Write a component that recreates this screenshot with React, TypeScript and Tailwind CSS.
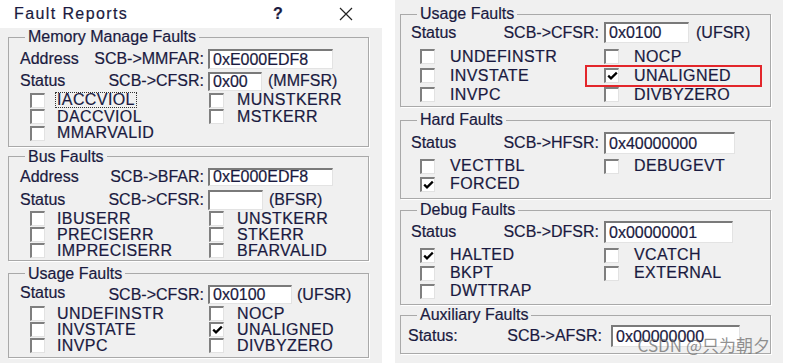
import React from "react";

function Check({ checked }: { checked?: boolean }) {
  return (
    <span className="flex h-[15px] w-[15px] shrink-0 items-center justify-center border-t-2 border-l-2 border-r border-b border-t-[#7f7f7f] border-l-[#7f7f7f] border-r-[#e2e2e2] border-b-[#e2e2e2] bg-white">
      {checked && (
        <svg width="11" height="10" viewBox="0 0 11 10">
          <path d="M1.2 4.6 L4 7.4 L9.8 1.6" fill="none" stroke="#000" strokeWidth="2.2" />
        </svg>
      )}
    </span>
  );
}

function Item({
  label,
  checked,
  gap,
  focus,
}: {
  label: string;
  checked?: boolean;
  gap: string;
  focus?: boolean;
}) {
  return (
    <div className={`flex items-center ${gap}`}>
      <Check checked={checked} />
      {focus ? (
        <span className="-ml-[2px] border border-dotted border-[#333] px-[1px] leading-[14px] tracking-[0.4px]">{label}</span>
      ) : (
        <span className="tracking-[0.4px]">{label}</span>
      )}
    </div>
  );
}

function Input({ value, cls }: { value: string; cls: string }) {
  return (
    <div
      className={`flex items-center border-t-2 border-l-2 border-r border-b border-t-[#7a7a7a] border-l-[#7a7a7a] border-r-[#e3e3e3] border-b-[#e3e3e3] bg-white pl-[3px] ${cls}`}
    >
      {value}
    </div>
  );
}

function Group({
  title,
  className,
  children,
}: {
  title: string;
  className: string;
  children: React.ReactNode;
}) {
  return (
    <fieldset className={`border border-[#a9a9a9] shadow-[1px_1px_0_#ffffff] ${className}`}>
      <legend className="ml-[16px] px-[3px] leading-[16px]">{title}</legend>
      {children}
    </fieldset>
  );
}

export default function App() {
  return (
    <div className="flex h-[363px] w-[786px] overflow-hidden bg-white font-['Liberation_Sans',Arial,sans-serif] text-[16px] text-[#1a1a40] [-webkit-text-stroke:0.2px_#1a1a40]">
      {/* Left panel */}
      <div className="flex w-[382px] flex-col">
        <div className="flex h-[28px] shrink-0 items-center bg-white">
          <span className="ml-[14px] w-[259px] text-[16px] tracking-[1.4px]">Fault Reports</span>
          <span className="text-[16px] font-bold">?</span>
          <svg className="ml-[56px]" width="14" height="14" viewBox="0 0 14 14">
            <path d="M1 1 L13 13 M13 1 L1 13" stroke="#222" strokeWidth="1.2" fill="none" />
          </svg>
        </div>
        <div className="flex flex-1 flex-col bg-[#f0f0f0] pl-[8px]">
          {/* Memory Manage Faults */}
          <Group title="Memory Manage Faults" className="mt-[1px] w-[361px] pb-[4px]">
            <div className="mt-[4px] flex h-[20px] items-center pl-[11px]">
              <span className="w-[70px]">Address</span>
              <span className="w-[114px] text-right">SCB-&gt;MMFAR:</span>
              <Input value="0xE000EDF8" cls="ml-[4px] h-[20px] w-[125px]" />
            </div>
            <div className="mt-[2px] flex h-[20px] items-center pl-[11px]">
              <span className="w-[70px]">Status</span>
              <span className="w-[114px] text-right">SCB-&gt;CFSR:</span>
              <Input value="0x00" cls="ml-[4px] h-[19px] w-[54px]" />
              <span className="ml-[6px]">(MMFSR)</span>
            </div>
            <div className="mt-[1px] grid auto-rows-[16.5px] grid-cols-[179px_1fr] pl-[21px]">
              <Item label="IACCVIOL" gap="gap-[12px]" focus />
              <Item label="MUNSTKERR" gap="gap-[13px]" />
              <Item label="DACCVIOL" gap="gap-[12px]" />
              <Item label="MSTKERR" gap="gap-[13px]" />
              <Item label="MMARVALID" gap="gap-[12px]" />
            </div>
          </Group>

          {/* Bus Faults */}
          <Group title="Bus Faults" className="mt-[2px] w-[361px] pb-[1px]">
            <div className="mt-[3px] flex h-[18px] items-center pl-[11px]">
              <span className="w-[70px]">Address</span>
              <span className="w-[114px] text-right">SCB-&gt;BFAR:</span>
              <Input value="0xE000EDF8" cls="ml-[4px] h-[18px] w-[125px]" />
            </div>
            <div className="mt-[4px] flex h-[20px] items-center pl-[11px]">
              <span className="w-[70px]">Status</span>
              <span className="w-[114px] text-right">SCB-&gt;CFSR:</span>
              <Input value="" cls="ml-[4px] h-[20px] w-[55px]" />
              <span className="ml-[6px]">(BFSR)</span>
            </div>
            <div className="mt-[1px] grid auto-rows-[16px] grid-cols-[179px_1fr] pl-[21px]">
              <Item label="IBUSERR" gap="gap-[12px]" />
              <Item label="UNSTKERR" gap="gap-[13px]" />
              <Item label="PRECISERR" gap="gap-[12px]" />
              <Item label="STKERR" gap="gap-[13px]" />
              <Item label="IMPRECISERR" gap="gap-[12px]" />
              <Item label="BFARVALID" gap="gap-[13px]" />
            </div>
          </Group>

          {/* Usage Faults */}
          <Group title="Usage Faults" className="mt-[5px] w-[361px] pb-[3px]">
            <div className="mt-[3px] flex h-[20px] items-center pl-[11px]">
              <span className="w-[70px] self-start leading-[16px]">Status</span>
              <span className="w-[114px] text-right">SCB-&gt;CFSR:</span>
              <Input value="0x0100" cls="ml-[4px] h-[19px] w-[84px]" />
              <span className="ml-[5px]">(UFSR)</span>
            </div>
            <div className="mt-[1px] grid auto-rows-[16px] grid-cols-[179px_1fr] pl-[21px]">
              <Item label="UNDEFINSTR" gap="gap-[12px]" />
              <Item label="NOCP" gap="gap-[13px]" />
              <Item label="INVSTATE" gap="gap-[12px]" />
              <Item label="UNALIGNED" gap="gap-[13px]" checked />
              <Item label="INVPC" gap="gap-[12px]" />
              <Item label="DIVBYZERO" gap="gap-[13px]" />
            </div>
          </Group>
        </div>
      </div>

      {/* Right panel */}
      <div className="relative ml-[13px] flex w-[388px] flex-col bg-[#f0f0f0] pl-[5px] pt-[6px]">
        {/* Usage Faults */}
        <Group title="Usage Faults" className="w-[371px] pb-[2px]">
          <div className="flex h-[21px] items-center pl-[10px]">
            <span className="w-[86px]">Status</span>
            <span className="w-[102px] text-right">SCB-&gt;CFSR:</span>
            <Input value="0x0100" cls="ml-[5px] h-[21px] w-[85px]" />
            <span className="ml-[7px]">(UFSR)</span>
          </div>
          <div className="mt-[4px] grid auto-rows-[19px] grid-cols-[184px_1fr] pl-[19px]">
            <Item label="UNDEFINSTR" gap="gap-[15px]" />
            <Item label="NOCP" gap="gap-[15px]" />
            <Item label="INVSTATE" gap="gap-[15px]" />
            <Item label="UNALIGNED" gap="gap-[15px]" checked />
            <Item label="INVPC" gap="gap-[15px]" />
            <Item label="DIVBYZERO" gap="gap-[15px]" />
          </div>
        </Group>

        {/* Hard Faults */}
        <Group title="Hard Faults" className="mt-[5px] w-[371px] pb-[5px]">
          <div className="mt-[4px] flex h-[22px] items-center pl-[10px]">
            <span className="w-[86px]">Status</span>
            <span className="w-[102px] text-right">SCB-&gt;HFSR:</span>
            <Input value="0x40000000" cls="ml-[5px] h-[22px] w-[131px]" />
          </div>
          <div className="mt-[3px] grid auto-rows-[18px] grid-cols-[184px_1fr] pl-[19px]">
            <Item label="VECTTBL" gap="gap-[15px]" />
            <Item label="DEBUGEVT" gap="gap-[15px]" />
            <Item label="FORCED" gap="gap-[15px]" checked />
          </div>
        </Group>

        {/* Debug Faults */}
        <Group title="Debug Faults" className="mt-[3px] w-[371px] pb-[4px]">
          <div className="mt-[3px] flex h-[22px] items-center pl-[10px]">
            <span className="w-[86px]">Status</span>
            <span className="w-[102px] text-right">SCB-&gt;DFSR:</span>
            <Input value="0x00000001" cls="ml-[5px] h-[22px] w-[129px]" />
          </div>
          <div className="mt-[3px] grid auto-rows-[18px] grid-cols-[184px_1fr] pl-[19px]">
            <Item label="HALTED" gap="gap-[15px]" checked />
            <Item label="VCATCH" gap="gap-[15px]" />
            <Item label="BKPT" gap="gap-[15px]" />
            <Item label="EXTERNAL" gap="gap-[15px]" />
            <Item label="DWTTRAP" gap="gap-[15px]" />
          </div>
        </Group>

        {/* Auxiliary Faults */}
        <Group title="Auxiliary Faults" className="mt-[2px] w-[371px] pb-[6px]">
          <div className="mt-[2px] flex h-[22px] items-center pl-[7px]">
            <span className="w-[94px]">Status:</span>
            <span className="w-[100px] text-right">SCB-&gt;AFSR:</span>
            <Input value="0x00000000" cls="ml-[9px] h-[22px] w-[129px]" />
          </div>
        </Group>

        {/* Red highlight */}
        <div className="absolute left-[190px] top-[65px] h-[22px] w-[177px] border-2 border-[#e3262b]" />

        {/* Watermark */}
        <div className="absolute bottom-[8px] right-[13px] font-['Noto_Sans_CJK_SC','Noto_Sans',sans-serif] text-[17px] leading-[20px] text-[rgba(110,110,110,0.75)] [-webkit-text-stroke:0px]">
          CSDN @只为朝夕
        </div>
      </div>
    </div>
  );
}
